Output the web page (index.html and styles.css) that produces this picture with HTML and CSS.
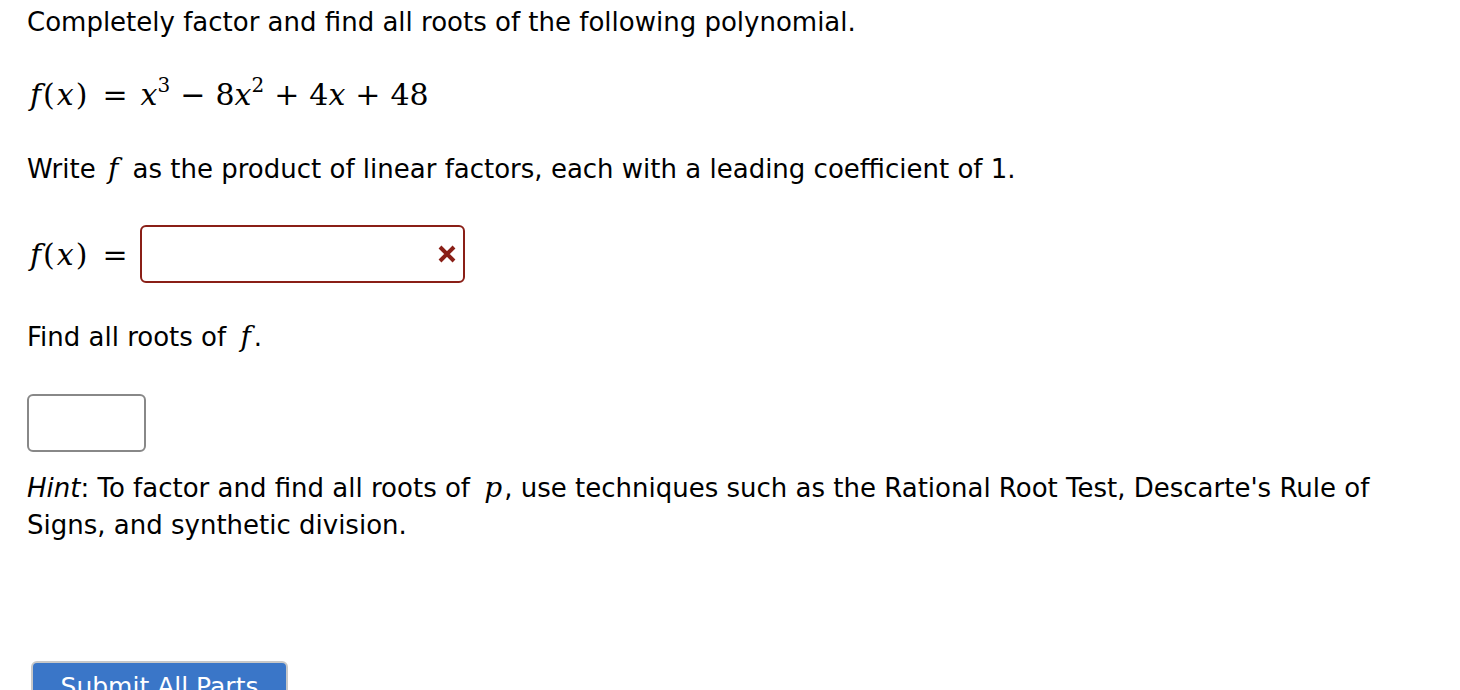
FILE: index.html
```html
<!DOCTYPE html>
<html>
<head>
<meta charset="utf-8">
<link rel="stylesheet" href="styles.css">
</head>
<body>
<div class="page">
  <p class="line first">Completely factor and find all roots of the following polynomial.</p>
  <div class="math eq"><span class="mi">f</span><span class="mo">(</span><span class="mi">x</span><span class="mo">)</span><span class="rel">=</span><span class="mi">x</span><sup>3</sup><span class="bin">−</span><span class="mn">8</span><span class="mi">x</span><sup>2</sup><span class="bin">+</span><span class="mn">4</span><span class="mi">x</span><span class="bin">+</span><span class="mn">48</span></div>
  <p class="line">Write <span class="math"><span class="mi">f</span></span> as the product of linear factors, each with a leading coefficient of 1.</p>
  <div class="answer-row">
    <div class="math"><span class="mi">f</span><span class="mo">(</span><span class="mi">x</span><span class="mo">)</span><span class="rel">=</span></div>
    <div class="input wrong">
      <svg class="xmark" width="18" height="18" viewBox="0 0 18 18"><path d="M2 2 L16 16 M16 2 L2 16" stroke="#8a1f17" stroke-width="4" stroke-linecap="butt" fill="none"/></svg>
    </div>
  </div>
  <p class="line roots">Find all roots of <span class="math"><span class="mi fend">f</span></span>.</p>
  <div class="input small"></div>
  <p class="line hint"><em>Hint</em>: To factor and find all roots of <span class="math"><span class="mi pvar">p</span></span>, use techniques such as the Rational Root Test, Descarte's Rule of Signs, and synthetic division.</p>
  <button class="submit">Submit All Parts</button>
</div>
</body>
</html>
```
FILE: styles.css
```css
html, body {
  margin: 0;
  padding: 0;
  background: #fff;
  overflow: hidden;
}
.page {
  padding: 0 40px 0 27px;
  font-family: "DejaVu Sans", Verdana, sans-serif;
  font-size: 26px;
  color: #000;
}
.line {
  margin: 0;
  line-height: 37px;
}
.first {
  padding-top: 4px;
}
.math {
  font-family: "DejaVu Serif", "Times New Roman", serif;
  font-size: 30px;
}
.line .math {
  font-size: 28px;
}
.mi {
  font-style: italic;
}
.mo {
  margin: 0 2px;
}
.eq > .mi:first-child,
.answer-row .math > .mi:first-child {
  margin-left: 3px;
}
.line .math .mi {
  margin: 0 6px 0 4px;
}
.line .math .pvar {
  margin: 0 2px 0 6px;
}
.line .math .fend {
  margin: 0 3px 0 6px;
}
.eq {
  margin-top: 34px;
  line-height: 40px;
}
.eq sup {
  font-size: 20px;
  vertical-align: 0;
  position: relative;
  top: -13px;
}
.rel {
  margin: 0 13px;
}
.bin {
  margin: 0 10px;
}
.eq + .line {
  margin-top: 32px;
}
.answer-row {
  display: flex;
  align-items: center;
  margin-top: 37px;
}
.answer-row .rel {
  margin-right: 12px;
}
.input {
  box-sizing: border-box;
  height: 58px;
  flex: none;
  border-radius: 6px;
  border: 2px solid #888;
  background: #fff;
}
.wrong {
  width: 325px;
  border-color: #8a1f17;
  display: flex;
  align-items: center;
  justify-content: flex-end;
  padding-right: 7px;
}
.roots {
  margin-top: 35px;
}
.small {
  width: 119px;
  margin-top: 38px;
}
.hint {
  margin-top: 17px;
}
.submit {
  display: block;
  margin: 117px 0 0 4px;
  width: 257px;
  height: 50px;
  border: 2px solid #c8c8c8;
  border-radius: 6px;
  background: #3a76c8;
  color: #fff;
  font-family: "DejaVu Sans", Verdana, sans-serif;
  font-size: 25px;
  text-align: center;
  padding: 2px 0 0 0;
  line-height: 30px;
}
```
